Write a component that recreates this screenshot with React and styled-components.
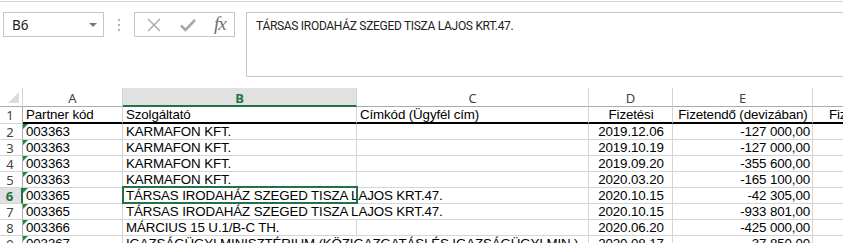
import styled, { createGlobalStyle } from "styled-components";

const GlobalStyle = createGlobalStyle`
  html, body {
    margin: 0;
    padding: 0;
    background: #fff;
    overflow: hidden;
  }
`;

const rows = [
  ["003363", "KARMAFON KFT.", "", "2019.12.06", "-127 000,00"],
  ["003363", "KARMAFON KFT.", "", "2019.10.19", "-127 000,00"],
  ["003363", "KARMAFON KFT.", "", "2019.09.20", "-355 600,00"],
  ["003363", "KARMAFON KFT.", "", "2020.03.20", "-165 100,00"],
  ["003365", "TÁRSAS IRODAHÁZ SZEGED TISZA LAJOS KRT.47.", "", "2020.10.15", "-42 305,00"],
  ["003365", "TÁRSAS IRODAHÁZ SZEGED TISZA LAJOS KRT.47.", "", "2020.10.15", "-933 801,00"],
  ["003366", "MÁRCIUS 15 U.1/B-C TH.", "", "2020.06.20", "-425 000,00"],
  ["003367", "IGAZSÁGÜGYI MINISZTÉRIUM (KÖZIGAZGATÁSI ÉS IGAZSÁGÜGYI MIN.)", "", "2020.08.17", "-37 850,00"],
];

const columns = ["A", "B", "C", "D", "E", "F"];
const selectedCol = "B";
const selectedRow = 6;

function App() {
  return (
    <>
      <GlobalStyle />
      <Window>
        <FormulaBar>
          <NameBox>
            <span>B6</span>
            <DropArrow />
          </NameBox>
          <Dots>
            <i />
            <i />
            <i />
          </Dots>
          <IconBox>
            <svg width="16" height="16" viewBox="0 0 16 16">
              <path d="M2 2 L14 14 M14 2 L2 14" stroke="#a8a8a8" strokeWidth="1.4" fill="none" />
            </svg>
            <svg width="18" height="16" viewBox="0 0 18 16">
              <path d="M2 8.5 L6.5 13 L16 3" stroke="#a8a8a8" strokeWidth="2.6" fill="none" />
            </svg>
            <Fx>fx</Fx>
          </IconBox>
          <FormulaInput>TÁRSAS IRODAHÁZ SZEGED TISZA LAJOS KRT.47.</FormulaInput>
        </FormulaBar>

        <Sheet>
          <Corner />
          {columns.map((c) => (
            <ColHeader key={c} $selected={c === selectedCol}>
              {c}
            </ColHeader>
          ))}

          <RowHeader>1</RowHeader>
          <Cell $first>Partner kód</Cell>
          <Cell $first>Szolgáltató</Cell>
          <Cell $first>Címkód (Ügyfél cím)</Cell>
          <Cell $first $align="center">Fizetési</Cell>
          <Cell $first $align="center">Fizetendő (devizában)</Cell>
          <Cell $first $align="center">Fizetési mód</Cell>

          {rows.map((r, i) => {
            const n = i + 2;
            const long = r[1].length > 30;
            return [
              <RowHeader key={`h${n}`} $selected={n === selectedRow}>
                {n}
              </RowHeader>,
              <Cell key={`a${n}`} $flag>
                {r[0]}
              </Cell>,
              <Cell key={`b${n}`} $spill={long} $active={n === selectedRow}>
                {r[1]}
              </Cell>,
              <Cell key={`c${n}`}>{r[2]}</Cell>,
              <Cell key={`d${n}`} $align="center">
                {r[3]}
              </Cell>,
              <Cell key={`e${n}`} $align="right">
                {r[4]}
              </Cell>,
              <Cell key={`f${n}`} />,
            ];
          })}
        </Sheet>
      </Window>
    </>
  );
}

export default App;

const Window = styled.div`
  width: 843px;
  height: 242px;
  margin-top: 1px;
  border-top: 1px solid #d5d5d5;
  box-sizing: border-box;
  overflow: hidden;
  display: flex;
  flex-direction: column;
`;

const FormulaBar = styled.div`
  display: flex;
  align-items: flex-start;
  height: 86px;
  flex: none;
  padding: 10px 0 0 3px;
  box-sizing: border-box;
`;

const NameBox = styled.div`
  width: 101px;
  height: 25px;
  box-sizing: border-box;
  border: 1px solid #c6c6c6;
  display: flex;
  align-items: center;
  justify-content: space-between;
  padding: 0 6px 0 8px;
  font-family: "Noto Sans", sans-serif;
  font-size: 13.5px;
  color: #222;
`;

const DropArrow = styled.span`
  width: 0;
  height: 0;
  border-left: 4px solid transparent;
  border-right: 4px solid transparent;
  border-top: 4px solid #777;
`;

const Dots = styled.div`
  display: flex;
  flex-direction: column;
  gap: 3px;
  margin: 7px 14px 0 14px;

  i {
    display: block;
    width: 2px;
    height: 2px;
    background: #b4b4b4;
  }
`;

const IconBox = styled.div`
  width: 101px;
  height: 25px;
  box-sizing: border-box;
  border: 1px solid #c6c6c6;
  display: flex;
  align-items: center;
  gap: 17px;
  padding-left: 11px;
`;

const Fx = styled.span`
  font-family: "Liberation Serif", "DejaVu Serif", serif;
  font-style: italic;
  font-size: 19px;
  color: #6e6e6e;
  letter-spacing: -1px;
  line-height: 1;
  margin-top: -2px;
`;

const FormulaInput = styled.div`
  flex: 1;
  margin-left: 11px;
  height: 65px;
  box-sizing: border-box;
  border: 1px solid #c6c6c6;
  border-right: none;
  padding: 5px 9px;
  font-family: Roboto, "Noto Sans", sans-serif;
  font-size: 12px;
  letter-spacing: -0.3px;
  line-height: 16px;
  color: #222;
  white-space: nowrap;
`;

const Sheet = styled.div`
  display: grid;
  grid-template-columns: 23px 100px 234px 232px 84px 140px 106px;
  grid-template-rows: 19px 17px repeat(8, 16px);
  width: max-content;
`;

const Corner = styled.div`
  position: relative;
  border-right: 1px solid #d4d4d4;
  border-bottom: 1px solid #ababab;
  box-sizing: border-box;

  &::after {
    content: "";
    position: absolute;
    right: 3px;
    bottom: 3px;
    width: 0;
    height: 0;
    border-left: 11px solid transparent;
    border-bottom: 11px solid #dcdcdc;
  }
`;

const ColHeader = styled.div`
  box-sizing: border-box;
  display: flex;
  align-items: center;
  justify-content: center;
  border-right: 1px solid #d4d4d4;
  border-bottom: ${(p) => (p.$selected ? "2px solid #217346" : "1px solid #ababab")};
  background: ${(p) => (p.$selected ? "#e1e1e1" : "#fff")};
  color: ${(p) => (p.$selected ? "#217346" : "#444")};
  font-weight: ${(p) => (p.$selected ? 700 : 400)};
  font-family: "Noto Sans", sans-serif;
  font-size: 13px;
  padding-top: ${(p) => (p.$selected ? "2px" : "1px")};
`;

const RowHeader = styled.div`
  box-sizing: border-box;
  display: flex;
  align-items: center;
  justify-content: center;
  border-right: ${(p) => (p.$selected ? "2px solid #217346" : "1px solid #ababab")};
  border-bottom: 1px solid #d4d4d4;
  background: ${(p) => (p.$selected ? "#e1e1e1" : "#fff")};
  color: ${(p) => (p.$selected ? "#217346" : "#444")};
  font-weight: ${(p) => (p.$selected ? 700 : 400)};
  font-family: "Noto Sans", sans-serif;
  font-size: 13px;
  line-height: 14px;
  padding-right: 2px;
  overflow: hidden;
`;

const Cell = styled.div`
  position: relative;
  box-sizing: border-box;
  border-right: ${(p) => (p.$spill ? "1px solid transparent" : "1px solid #d4d4d4")};
  border-bottom: ${(p) => (p.$first ? "2px solid #000" : "1px solid #d4d4d4")};
  padding: 0 2px 0 3px;
  font-family: "Liberation Sans", Arial, sans-serif;
  font-size: 13.33px;
  letter-spacing: -0.12px;
  line-height: 15px;
  color: #000;
  white-space: nowrap;
  overflow: ${(p) => (p.$spill ? "visible" : "hidden")};
  text-align: ${(p) => p.$align || "left"};
  z-index: ${(p) => (p.$active ? 2 : p.$spill ? 1 : 0)};

  ${(p) =>
    p.$flag &&
    `
    &::before {
      content: "";
      position: absolute;
      top: 0;
      left: 0;
      width: 0;
      height: 0;
      border-top: 5px solid #1a8a3a;
      border-right: 5px solid transparent;
    }
  `}

  ${(p) =>
    p.$active &&
    `
    &::after {
      content: "";
      position: absolute;
      top: -2px;
      left: -1px;
      right: -2px;
      bottom: -1px;
      border: 2px solid #217346;
      pointer-events: none;
    }
  `}
`;
